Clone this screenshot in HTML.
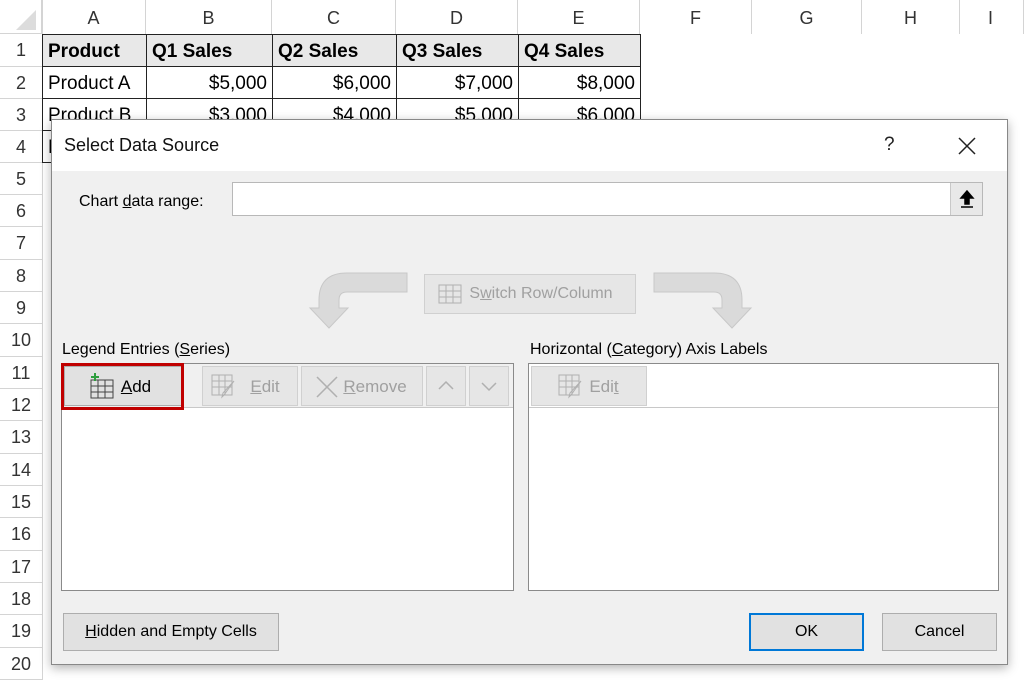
<!DOCTYPE html>
<html><head><style>
*{margin:0;padding:0;box-sizing:border-box}
body{width:1024px;height:680px;overflow:hidden;background:#fff;font-family:"Liberation Sans",sans-serif;position:relative;color:#000}
.a{position:absolute}
.ch{position:absolute;top:0;height:34px;line-height:36px;text-align:center;font-size:18px;color:#333;border-right:1px solid #d4d4d4;background:#fff}
.rh{position:absolute;left:0;width:42px;text-align:center;font-size:18px;color:#333;border-bottom:1px solid #d4d4d4;background:#fff}
.c{position:absolute;height:33px;line-height:33px;font-size:19px;padding:0 5px;border:1px solid #222;overflow:hidden;white-space:nowrap}
.b{font-weight:bold;background:#e8e8e8}
.r{text-align:right}
.btn{position:absolute;background:#e1e1e1;border:1px solid #adadad;font-size:16px;text-align:center;color:#000}
.dis{color:#a0a0a0;border-color:#d0d0d0;background:#e6e6e6}
.lb{position:absolute;font-size:16px;color:#000}
</style></head><body>
<div class="a" style="left:0;top:0;width:1024px;height:34px;background:#fff;border-bottom:1px solid #d4d4d4"></div>
<div class="a" style="left:0;top:0;width:42px;height:34px;border-right:1px solid #d4d4d4"><svg width="42" height="34"><polygon points="36,10 36,30 16,30" fill="#dcdcdc"/></svg></div>
<div class="ch" style="left:42px;width:104px">A</div>
<div class="ch" style="left:146px;width:126px">B</div>
<div class="ch" style="left:272px;width:124px">C</div>
<div class="ch" style="left:396px;width:122px">D</div>
<div class="ch" style="left:518px;width:122px">E</div>
<div class="ch" style="left:640px;width:112px">F</div>
<div class="ch" style="left:752px;width:110px">G</div>
<div class="ch" style="left:862px;width:98px">H</div>
<div class="ch" style="left:960px;width:64px;text-align:left;padding-left:28px">I</div>
<div class="a" style="left:42px;top:0;width:1px;height:680px;background:#d4d4d4"></div>
<div class="rh" style="top:34px;height:33px;line-height:33px">1</div>
<div class="rh" style="top:67px;height:32px;line-height:32px">2</div>
<div class="rh" style="top:99px;height:32px;line-height:32px">3</div>
<div class="rh" style="top:131px;height:32px;line-height:32px">4</div>
<div class="rh" style="top:163px;height:32px;line-height:32px">5</div>
<div class="rh" style="top:195px;height:32px;line-height:32px">6</div>
<div class="rh" style="top:227px;height:33px;line-height:33px">7</div>
<div class="rh" style="top:260px;height:32px;line-height:32px">8</div>
<div class="rh" style="top:292px;height:32px;line-height:32px">9</div>
<div class="rh" style="top:324px;height:33px;line-height:33px">10</div>
<div class="rh" style="top:357px;height:32px;line-height:32px">11</div>
<div class="rh" style="top:389px;height:32px;line-height:32px">12</div>
<div class="rh" style="top:421px;height:33px;line-height:33px">13</div>
<div class="rh" style="top:454px;height:32px;line-height:32px">14</div>
<div class="rh" style="top:486px;height:32px;line-height:32px">15</div>
<div class="rh" style="top:518px;height:33px;line-height:33px">16</div>
<div class="rh" style="top:551px;height:32px;line-height:32px">17</div>
<div class="rh" style="top:583px;height:32px;line-height:32px">18</div>
<div class="rh" style="top:615px;height:33px;line-height:33px">19</div>
<div class="rh" style="top:648px;height:32px;line-height:32px">20</div>

<div class="c b" style="left:42px;top:34px;width:105px">Product</div>
<div class="c b" style="left:146px;top:34px;width:127px">Q1 Sales</div>
<div class="c b" style="left:272px;top:34px;width:125px">Q2 Sales</div>
<div class="c b" style="left:396px;top:34px;width:123px">Q3 Sales</div>
<div class="c b" style="left:518px;top:34px;width:123px">Q4 Sales</div>
<div class="c" style="left:42px;top:66px;width:105px">Product A</div>
<div class="c r" style="left:146px;top:66px;width:127px">$5,000</div>
<div class="c r" style="left:272px;top:66px;width:125px">$6,000</div>
<div class="c r" style="left:396px;top:66px;width:123px">$7,000</div>
<div class="c r" style="left:518px;top:66px;width:123px">$8,000</div>
<div class="c" style="left:42px;top:98px;width:105px">Product B</div>
<div class="c r" style="left:146px;top:98px;width:127px">$3,000</div>
<div class="c r" style="left:272px;top:98px;width:125px">$4,000</div>
<div class="c r" style="left:396px;top:98px;width:123px">$5,000</div>
<div class="c r" style="left:518px;top:98px;width:123px">$6,000</div>
<div class="c" style="left:42px;top:130px;width:105px">P</div>

<!-- dialog -->
<div class="a" style="left:51px;top:119px;width:957px;height:546px;background:#f0f0f0;border:1px solid #888;box-shadow:0 3px 10px rgba(0,0,0,.3)">
  <div class="a" style="left:0;top:0;width:955px;height:51px;background:#fff"></div>
  <div class="lb" style="left:12px;top:15px;font-size:18px;color:#111">Select Data Source</div>
  <div class="lb" style="left:832px;top:14px;font-size:19px;color:#222">?</div>
  <svg class="a" style="left:905px;top:16px" width="20" height="20"><path d="M2 2L18 18M18 2L2 18" stroke="#222" stroke-width="1.5"/></svg>

  <div class="lb" style="left:27px;top:73px">Chart <u>d</u>ata range:</div>
  <div class="a" style="left:180px;top:62px;width:751px;height:34px;background:#fff;border:1px solid #b8b8b8"></div>
  <div class="a" style="left:898px;top:63px;width:32px;height:32px;background:#e8e8e8;border-left:1px solid #c8c8c8"><svg width="32" height="32"><path d="M16 8L10 15H14V21H18V15H22Z M10 24H22" fill="#000" stroke="#000" stroke-width="1.5"/></svg></div>

  <!-- arrows -->
  <svg class="a" style="left:255px;top:150px" width="110" height="62"><path d="M100 3H40Q12 3 12 30V38H3L22 58L41 38H32V30Q32 22 40 22H100Z" fill="#dadada" stroke="#c8c8c8"/></svg>
  <svg class="a" style="left:600px;top:150px" width="110" height="62"><path d="M2 3H62Q90 3 90 30V38H99L80 58L61 38H70V30Q70 22 62 22H2Z" fill="#dadada" stroke="#c8c8c8"/></svg>
  <div class="btn dis" style="left:372px;top:154px;width:212px;height:40px;line-height:38px;padding-left:22px">S<u>w</u>itch Row/Column</div>
  <svg class="a" style="left:384px;top:162px" width="28" height="24"><g stroke="#b0b0b0" fill="none"><rect x="3" y="3" width="22" height="18"/><path d="M3 9H25M3 15H25M10 3V21M17 3V21"/></g></svg>

  <div class="lb" style="left:10px;top:221px">Legend Entries (<u>S</u>eries)</div>
  <div class="lb" style="left:478px;top:221px">Horizontal (<u>C</u>ategory) Axis Labels</div>

  <div class="a" style="left:9px;top:243px;width:453px;height:228px;background:#fff;border:1px solid #8a8a8a">
    <div class="a" style="left:0;top:0;width:451px;height:44px;background:#f0f0f0;border-bottom:1px solid #c8c8c8"></div>
  </div>
  <div class="a" style="left:476px;top:243px;width:471px;height:228px;background:#fff;border:1px solid #8a8a8a">
    <div class="a" style="left:0;top:0;width:469px;height:44px;background:#fff;border-bottom:1px solid #c8c8c8"></div>
  </div>
  <div class="btn" style="left:12px;top:246px;width:118px;height:40px;line-height:40px;padding-left:26px;font-size:17px"><u>A</u>dd</div>
  <svg class="a" style="left:35px;top:252px" width="30" height="28"><g stroke="#444" fill="none"><rect x="4" y="8" width="22" height="18"/><path d="M4 14H26M4 20H26M11 8V26M18 8V26"/></g><path d="M8 1V9M4 5H12" stroke="#2e9e3e" stroke-width="2"/></svg>
  <div class="a" style="left:9px;top:243px;width:123px;height:47px;border:3px solid #c00000"></div>
  <div class="btn dis" style="left:150px;top:246px;width:96px;height:40px;line-height:40px;padding-left:30px;font-size:17px"><u>E</u>dit</div>
  <svg class="a" style="left:158px;top:253px" width="28" height="26"><g stroke="#b0b0b0" fill="none"><rect x="2" y="2" width="20" height="20"/><path d="M2 8H22M2 14H22M9 2V22M15 2V22M24 8L14 22L12 24L13 20Z"/></g></svg>
  <div class="btn dis" style="left:249px;top:246px;width:122px;height:40px;line-height:40px;padding-left:26px;font-size:17px"><u>R</u>emove</div>
  <svg class="a" style="left:264px;top:256px" width="22" height="22"><path d="M1 1L21 21M21 1L1 21" stroke="#b0b0b0" stroke-width="1.5"/></svg>
  <div class="btn dis" style="left:374px;top:246px;width:40px;height:40px"><svg width="38" height="38"><path d="M12 22L19 15L26 22" stroke="#b0b0b0" fill="none" stroke-width="1.5"/></svg></div>
  <div class="btn dis" style="left:417px;top:246px;width:40px;height:40px"><svg width="38" height="38"><path d="M12 16L19 23L26 16" stroke="#b0b0b0" fill="none" stroke-width="1.5"/></svg></div>
  <div class="btn dis" style="left:479px;top:246px;width:116px;height:40px;line-height:40px;padding-left:30px;font-size:17px">Edi<u>t</u></div>
  <svg class="a" style="left:505px;top:253px" width="28" height="26"><g stroke="#b0b0b0" fill="none"><rect x="2" y="2" width="20" height="20"/><path d="M2 8H22M2 14H22M9 2V22M15 2V22M24 8L14 22L12 24L13 20Z"/></g></svg>

  <div class="btn" style="left:11px;top:493px;width:216px;height:38px;line-height:36px"><u>H</u>idden and Empty Cells</div>
  <div class="btn" style="left:697px;top:493px;width:115px;height:38px;line-height:34px;border:2px solid #0078d7">OK</div>
  <div class="btn" style="left:830px;top:493px;width:115px;height:38px;line-height:36px">Cancel</div>
</div>
</body></html>
